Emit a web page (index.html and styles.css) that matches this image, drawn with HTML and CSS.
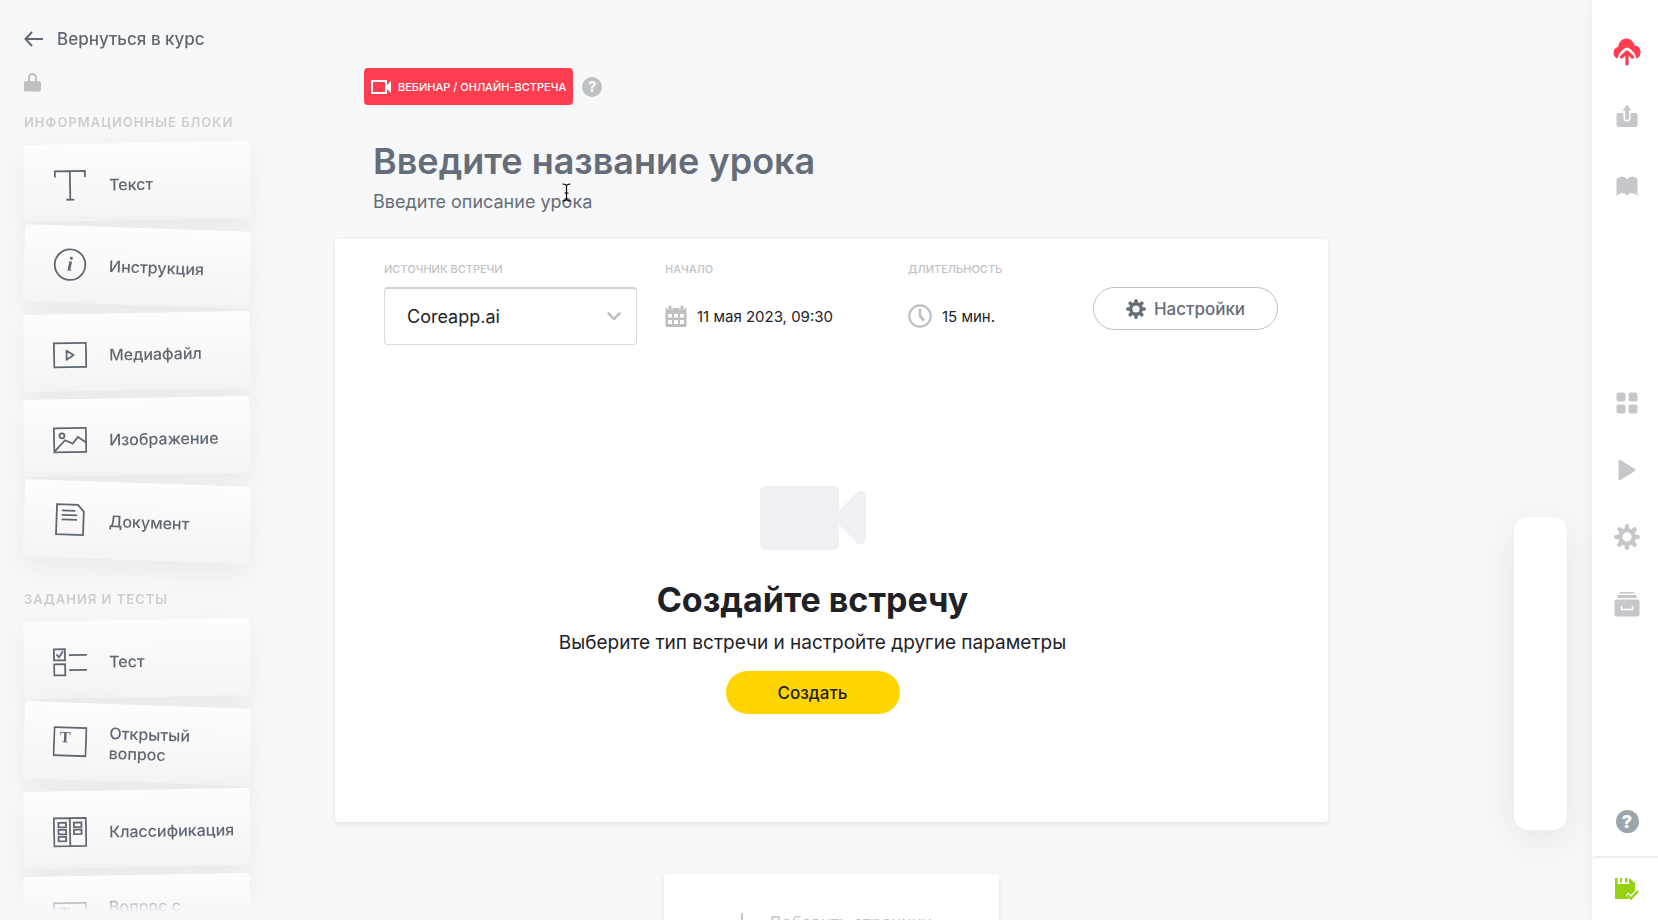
FILE: index.html
```html
<!DOCTYPE html>
<html lang="ru">
<head>
    <meta charset="utf-8">
    <title>Вебинар / Онлайн-встреча</title>
    <link rel="stylesheet" href="styles.css">
</head>
<body>
    <div class="page">
        <!-- Blocks sidebar -->
        <aside class="sidebar">
            <a class="back" href="#">
                <svg width="20" height="16" viewBox="0 0 20 16" fill="none" stroke="currentColor" stroke-width="2"><path d="M19 8H1.500M8 1L1.500 8L8 15"/></svg>
                Вернуться в курс
            </a>
            <svg class="lock" width="17" height="19" viewBox="0 0 17 19"><path d="M5 9V4.500a3.500 3.500 0 0 1 7 0V9" fill="none" stroke="#bfc0c2" stroke-width="2"/><rect y="8" width="17" height="10.500" rx="1.500" fill="#bfc0c2"/></svg>

            <h2 class="group-title">Информационные блоки</h2>
            <div class="blocks">
                <button class="block">
                    <svg width="34" height="34" viewBox="0 0 34 34"><path d="M2 9V3H32V9M17 3V31M13 31.500H21"/></svg>
                    <span>Текст</span>
                </button>
                <button class="block right">
                    <svg width="34" height="34" viewBox="0 0 34 34"><circle cx="17" cy="17" r="15.300"/><text class="glyph italic" x="17" y="23" text-anchor="middle">i</text></svg>
                    <span>Инструкция</span>
                </button>
                <button class="block">
                    <svg width="34" height="34" viewBox="0 0 34 34"><rect x="1" y="5" width="32" height="24"/><path d="M13.500 12.500V21.500L20.500 17Z" stroke-linejoin="round"/></svg>
                    <span>Медиафайл</span>
                </button>
                <button class="block">
                    <svg width="34" height="34" viewBox="0 0 34 34"><rect x="1" y="5" width="32" height="24"/><circle cx="9" cy="12.500" r="2.500"/><path d="M1.500 28L12 17L19.500 20.500L25 14L33 19.500"/></svg>
                    <span>Изображение</span>
                </button>
                <button class="block right">
                    <svg width="34" height="34" viewBox="0 0 34 34"><path d="M3.500 2H24.500L30.500 8.500V32H3.500ZM8.500 8H22M8.500 12.500H24M8.500 17H24"/></svg>
                    <span>Документ</span>
                </button>
            </div>

            <h2 class="group-title">Задания и тесты</h2>
            <div class="blocks">
                <button class="block">
                    <svg width="34" height="34" viewBox="0 0 34 34"><path d="M1 4H12V15H1ZM1 19H12V30H1ZM16 10H34M16 25H34M3.500 9L6 12L10 6"/></svg>
                    <span>Тест</span>
                </button>
                <button class="block right">
                    <svg width="34" height="34" viewBox="0 0 34 34"><rect x="1" y="3" width="32" height="28"/><text class="glyph" x="12" y="18" text-anchor="middle">T</text></svg>
                    <span>Открытый<br>вопрос</span>
                </button>
                <button class="block">
                    <svg width="34" height="34" viewBox="0 0 34 34"><path d="M1 3H33V31H1ZM17 3V31M5.500 7.500H13V12H5.500ZM5.500 14.500H13V19H5.500ZM5.500 21.500H13V26H5.500ZM21 7.500H28.500V12H21ZM21 14.500H28.500V19H21Z"/></svg>
                    <span>Классификация</span>
                </button>
                <button class="block">
                    <svg width="34" height="34" viewBox="0 0 34 34"><rect x="1" y="3" width="32" height="28"/><text class="glyph" x="12" y="18" text-anchor="middle">T</text></svg>
                    <span>Вопрос с<br>ответом</span>
                </button>
            </div>
        </aside>

        <!-- Lesson editor -->
        <main class="editor">
            <div class="lesson-head">
                <div class="type-row">
                    <span class="type">
                        <svg width="20" height="14" viewBox="0 0 20 14"><rect x="1" y="1" width="14" height="12" fill="none" stroke="#fff" stroke-width="2"/><path d="M15 6L20 1V13L15 8Z" fill="#fff"/></svg>
                        Вебинар / Онлайн-встреча
                    </span>
                    <button class="hint" aria-label="Справка">?</button>
                </div>
                <input class="lesson-name" type="text" placeholder="Введите название урока" aria-label="Название урока">
                <input class="lesson-text" type="text" placeholder="Введите описание урока" aria-label="Описание урока">
                <svg class="cursor" width="9" height="19" viewBox="0 0 9 19" fill="none" stroke="#000" stroke-width="1.200"><path d="M.5 1C3 1 4.500 1.500 4.500 3.500V15.500C4.500 17.500 3 18 .5 18M8.500 1C6 1 4.500 1.500 4.500 3.500M4.500 15.500C4.500 17.500 6 18 8.500 18M2.500 10H6.500"/></svg>
            </div>

            <section class="panel">
                <div class="settings">
                    <div class="field source">
                        <label for="source">Источник встречи</label>
                        <div class="select">
                            <select id="source">
                                <option>Coreapp.ai</option>
                            </select>
                            <svg width="14" height="9" viewBox="0 0 14 9" fill="none" stroke="#bfc0c2" stroke-width="2.600" stroke-linecap="round"><path d="M1.500 1.500L7 7L12.500 1.500"/></svg>
                        </div>
                    </div>
                    <div class="field start">
                        <span class="caption">Начало</span>
                        <button class="value">
                            <svg width="22" height="22" viewBox="0 0 22 22"><path d="M2 3H20Q21.500 3 21.500 4.500V20.500Q21.500 22 20 22H2Q.5 22 .5 20.500V4.500Q.5 3 2 3Z" fill="#bfc0c2"/><path d="M3 9H7V12.500H3ZM9 9H13V12.500H9ZM15 9H19V12.500H15ZM3 15H7V19H3ZM9 15H13V19H9ZM15 15H19V19H15Z" fill="#fff"/><path d="M5 2V5M17 2V5" stroke="#fff" stroke-width="5"/><path d="M5 2V5M17 2V5" stroke="#bfc0c2" stroke-width="3" stroke-linecap="round"/></svg>
                            11 мая 2023, 09:30
                        </button>
                    </div>
                    <div class="field">
                        <span class="caption">Длительность</span>
                        <button class="value">
                            <svg width="24" height="24" viewBox="0 0 24 24" fill="none" stroke="#bfc0c2"><circle cx="12" cy="12" r="10.700" stroke-width="2.200"/><path d="M12 5V12L16 16.500" stroke-width="2.800"/></svg>
                            15 мин.
                        </button>
                    </div>
                    <button class="options">
                        <svg width="20" height="20" viewBox="0 0 24 24"><use href="#gear"/></svg>
                        Настройки
                    </button>
                </div>

                <div class="empty">
                    <svg width="106" height="64" viewBox="0 0 106 64" fill="#eff0f3"><rect width="79" height="64" rx="5"/><path d="M79 25L97 6.500Q100 3.500 103 5.500Q106 7 106 10V53Q106 56 103 58Q100 60 97 57L79 39Z"/></svg>
                    <h1>Создайте встречу</h1>
                    <p>Выберите тип встречи и настройте другие параметры</p>
                    <button class="create">Создать</button>
                </div>
            </section>

            <button class="add-page">
                <svg width="20" height="20" viewBox="0 0 20 20" stroke="#c4c6ca" stroke-width="2"><path d="M10 0V20M0 10H20"/></svg>
                Добавить страницу
            </button>
        </main>

        <div class="drawer"></div>

        <!-- Tool rail -->
        <nav class="rail">
            <a class="logo" href="#" aria-label="Главная">
                <svg width="28" height="28" viewBox="0 0 28 28"><path d="M4.500 20.500C2 20 .5 17.500 .5 15C.5 12 2 9.500 5 9C6 3.500 9.500 .5 13.500 .5C17.500 .5 20.500 3.500 21.500 7.500C25.500 7.500 27.500 10.500 27.500 14C27.500 17.500 26 20 23.500 20.500C22.500 16 18.500 10.500 14 9.500C9.500 10.500 5.500 16 4.500 20.500Z" fill="#ff3d51"/><path d="M14 26V15M8.500 19L14 14L19.500 19" fill="none" stroke="#ff3d51" stroke-width="3.200" stroke-linecap="round" stroke-linejoin="round"/></svg>
            </a>
            <button class="tool wide" aria-label="Поделиться">
                <svg width="22" height="24" viewBox="0 0 22 24"><path d="M2.500 9H7.500V14A3.500 3.500 0 0 0 14.500 14V9H19.500Q21.500 9 21.500 11V21Q21.500 23 19.500 23H2.500Q.5 23 .5 21V11Q.5 9 2.500 9Z"/><path d="M11 .5L15.500 6.500H13V14A2 2 0 0 1 9 14V6.500H6.500Z"/></svg>
            </button>
            <button class="tool wide" aria-label="Материалы">
                <svg width="22" height="22" viewBox="0 0 22 22"><path d="M.5 4Q5.500 -1 11 4Q16.500 -1 21.500 4V21Q16 15.500 11 20.500Q6 15.500 .5 21Z"/></svg>
            </button>
            <div class="tools">
                <button class="tool" aria-label="Страницы">
                    <svg width="22" height="22" viewBox="0 0 22 22"><rect x=".5" y=".5" width="9" height="9" rx="2"/><rect x="12.500" y=".5" width="9" height="9" rx="2"/><rect x=".5" y="12.500" width="9" height="9" rx="2"/><rect x="12.500" y="12.500" width="9" height="9" rx="2"/></svg>
                </button>
                <button class="tool" aria-label="Просмотр">
                    <svg width="22" height="22" viewBox="0 0 22 22"><path d="M2.500 2Q2.500 0 4.500 1L19 10Q20 11 19 12L4.500 21Q2.500 22 2.500 20Z"/></svg>
                </button>
                <button class="tool" aria-label="Настройки урока">
                    <svg width="26" height="26" viewBox="0 0 24 24">
                        <g id="gear">
                            <circle cx="12" cy="12" r="6.300" fill="none" stroke="currentColor" stroke-width="4"/>
                            <path d="M12 2.200V5M12 19V21.800M2.200 12H5M19 12H21.800M5 5L7 7M17 17L19 19M5 19L7 17M17 7L19 5" fill="none" stroke="currentColor" stroke-width="4.200" stroke-linecap="round"/>
                        </g>
                    </svg>
                </button>
                <button class="tool" aria-label="Архив">
                    <svg width="26" height="26" viewBox="0 0 26 26"><path d="M6 1H20L21 2.500H5ZM4 4H22L23 7H3Z"/><rect x=".5" y="8.500" width="25" height="17" rx="2"/><path d="M7.500 15V18.500H18.500V15" fill="none" stroke="#fff" stroke-width="1.600"/></svg>
                </button>
            </div>
            <button class="hint help" aria-label="Помощь">?</button>
            <button class="save" aria-label="Сохранить">
                <svg width="26" height="24" viewBox="0 0 26 24"><path d="M1 1H3.500V7H15V1L21 6V14L17 18L14 15.500L12 18L15 22H1Z" fill="#94d213"/><path d="M6 1H8V5.500H6ZM11 1H13.500V5.500H11Z" fill="#94d213"/><path d="M13.500 18L17 21.500L24 14" fill="none" stroke="#94d213" stroke-width="2.400"/></svg>
            </button>
        </nav>
    </div>
</body>
</html>
```

FILE: styles.css
```css
* {
    box-sizing: border-box;
}
body {
    margin: 0;
    font-family: Inter, "Liberation Sans", sans-serif;
    background-color: #f7f8fa;
    color: #1e2227;
}
button, input, select {
    font-family: inherit;
    color: inherit;
    border: none;
    background: none;
    padding: 0;
    margin: 0;
}
button {
    cursor: pointer;
}
svg {
    display: block;
    flex: none;
}
.page {
    display: flex;
    height: 100vh;
    overflow: hidden;
    position: relative;
}

/* Sidebar */
.sidebar {
    width: 274px;
    flex: none;
    padding: 27px 24px 0;
    overflow: hidden;
    -webkit-mask-image: linear-gradient(#000 calc(100% - 32px), transparent calc(100% - 8px));
    mask-image: linear-gradient(#000 calc(100% - 32px), transparent calc(100% - 8px));
}
.back {
    display: flex;
    align-items: center;
    gap: 13px;
    font-size: 17px;
    line-height: 24px;
    font-weight: 500;
    color: #5f6772;
    text-decoration: none;
}
.lock {
    margin-top: 22px;
}
.group-title {
    margin: 22px 0 13px;
    font-size: 13px;
    line-height: 16px;
    font-weight: 600;
    letter-spacing: 1px;
    text-transform: uppercase;
    white-space: nowrap;
    color: #cbcdcf;
}
.blocks {
    display: flex;
    flex-direction: column;
    gap: 8px;
}
.blocks + .group-title {
    margin-top: 31px;
}
.block {
    display: flex;
    align-items: center;
    gap: 22px;
    height: 77px;
    padding: 4px 0 0 29px;
    border-radius: 4px;
    background: linear-gradient(#fdfdfd, #f4f4f4);
    box-shadow: 0 10px 30px rgba(60, 70, 70, 0.08);
    transform: rotate(-1deg);
    font-size: 16px;
    line-height: 20px;
    font-weight: 500;
    text-align: left;
    color: #5f6772;
}
.block.right {
    padding-top: 0;
    transform: rotate(2deg);
}
.block svg {
    fill: none;
    stroke: #5f6772;
    stroke-width: 1.8;
}
.block .glyph {
    font: bold 16px "Liberation Serif", serif;
    fill: #5f6772;
    stroke: none;
}
.block .italic {
    font-size: 20px;
    font-style: italic;
}

/* Editor */
.editor {
    flex: 1;
    min-width: 0;
    margin: 0 264px 0 61px;
    padding-top: 68px;
}
.lesson-head {
    position: relative;
    padding: 0 29px;
}
.type-row {
    display: flex;
    align-items: center;
    gap: 9px;
}
.type {
    display: flex;
    align-items: center;
    gap: 7px;
    height: 37px;
    padding: 0 7px;
    border-radius: 4px;
    background-color: #ff3d51;
    color: #fff;
    font-size: 11px;
    font-weight: 500;
    text-transform: uppercase;
}
.hint {
    width: 20px;
    height: 20px;
    border-radius: 50%;
    background-color: #bfc0c2;
    color: #f7f8fa;
    font-size: 15px;
    line-height: 20px;
    font-weight: 800;
}
.lesson-name, .lesson-text {
    display: block;
    width: 100%;
    padding: 0 9px;
    outline: none;
}
.lesson-name {
    margin-top: 32px;
    height: 48px;
    font-size: 36px;
    font-weight: 600;
}
.lesson-text {
    height: 32px;
    font-size: 18px;
}
.lesson-name::placeholder, .lesson-text::placeholder {
    color: #656d78;
    opacity: 1;
}
/* text pointer over the description */
.cursor {
    position: absolute;
    left: 227px;
    top: 115px;
}
.panel {
    margin-top: 22px;
    height: 583px;
    padding: 22px 50px 0 49px;
    border-radius: 4px;
    background-color: #fff;
    box-shadow: 0 2px 5px rgba(50, 70, 60, 0.12);
}
.settings {
    display: flex;
    align-items: flex-start;
}
.field label, .caption {
    display: block;
    font-size: 11px;
    line-height: 16px;
    font-weight: 500;
    text-transform: uppercase;
    color: #bfc1c5;
}
.source {
    width: 253px;
    margin-right: 28px;
}
.start {
    width: 243px;
}
.select {
    position: relative;
    margin-top: 10px;
}
.select select {
    appearance: none;
    width: 100%;
    height: 58px;
    padding: 0 22px;
    border: 1px solid #d9dadb;
    border-top: 2px solid #d0d1d2;
    border-radius: 4px;
    font-size: 18px;
}
.select svg {
    position: absolute;
    right: 16px;
    top: 25px;
    pointer-events: none;
}
.value {
    display: flex;
    align-items: center;
    gap: 10px;
    height: 58px;
    margin-top: 10px;
    font-size: 15px;
    white-space: nowrap;
}
.options {
    display: flex;
    align-items: center;
    justify-content: center;
    gap: 8px;
    width: 185px;
    height: 43px;
    margin: 26px 0 0 auto;
    border: 1px solid #bfc0c2;
    border-radius: 22px;
    font-size: 17px;
    font-weight: 500;
    color: #656d78;
}
.empty {
    display: flex;
    flex-direction: column;
    align-items: center;
    margin-top: 141px;
    padding-right: 37px;
    text-align: center;
}
.empty h1 {
    margin: 30px 0 0;
    font-size: 34px;
    line-height: 40px;
    font-weight: 700;
}
.empty p {
    margin: 11px 0 0;
    font-size: 19px;
    line-height: 24px;
}
.create {
    width: 174px;
    height: 43px;
    margin-top: 16px;
    border-radius: 22px;
    background-color: #ffd500;
    font-size: 17px;
    font-weight: 500;
}
.add-page {
    display: flex;
    align-items: center;
    justify-content: center;
    gap: 16px;
    width: 335px;
    height: 98px;
    margin: 52px auto 0;
    border-radius: 4px;
    background-color: #fff;
    box-shadow: 0 2px 5px rgba(50, 70, 60, 0.12);
    font-size: 17px;
    color: #c4c6ca;
}

/* Empty drawer floating beside the rail */
.drawer {
    position: absolute;
    right: 91px;
    bottom: 90px;
    width: 53px;
    height: 313px;
    border-radius: 14px;
    background-color: #fff;
    box-shadow: 0 10px 40px rgba(50, 60, 60, 0.1);
}

/* Rail */
.rail {
    position: relative;
    display: flex;
    flex-direction: column;
    align-items: center;
    width: 66px;
    flex: none;
    padding-top: 23px;
    background-color: #fff;
    box-shadow: 0 0 16px rgba(0, 0, 0, 0.06);
}
.logo, .tool, .save {
    display: flex;
    align-items: center;
    justify-content: center;
    width: 100%;
    padding-left: 4px;
}
.logo {
    height: 58px;
}
.tool {
    height: 67px;
    color: #c5c7ca;
    fill: #c5c7ca;
}
.tool.wide {
    height: 70px;
}
.tools {
    width: 100%;
    margin-top: 148px;
}
.help {
    width: 23px;
    height: 23px;
    margin: auto 0 23px 4px;
    background-color: #9ba5ab;
    color: #fff;
    font-size: 18px;
    line-height: 23px;
}
.save {
    height: 64px;
    border-top: 2px solid #eeeeef;
    border-top-left-radius: 4px;
}
```
